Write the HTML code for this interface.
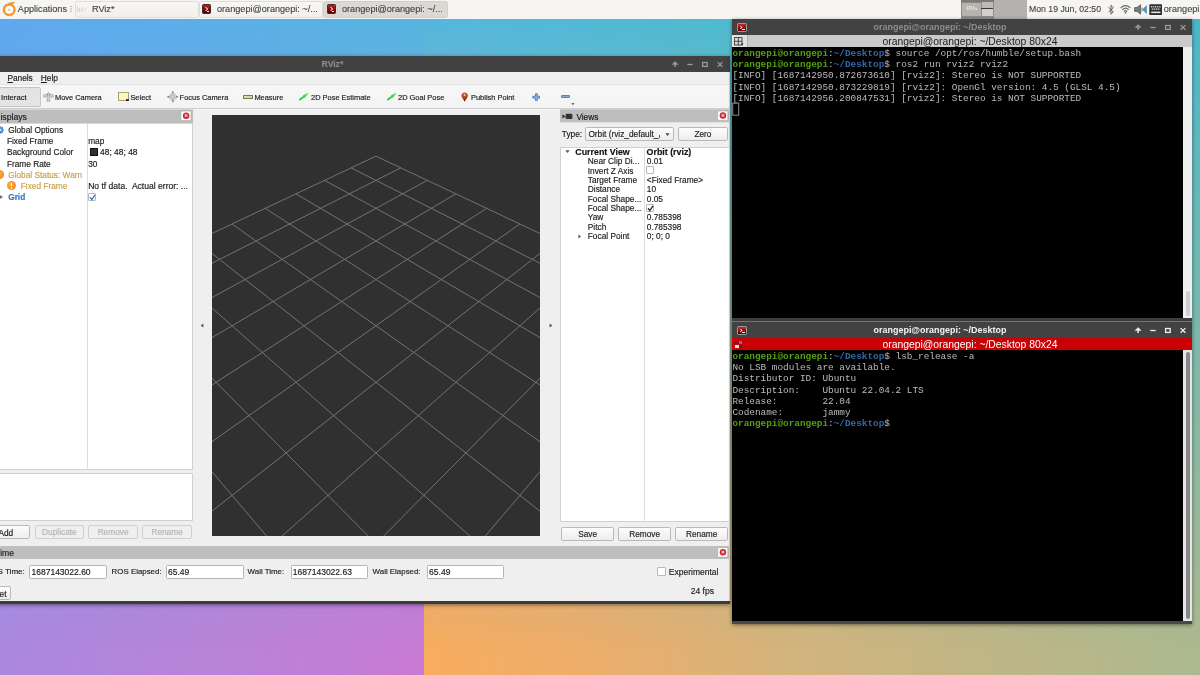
<!DOCTYPE html>
<html><head><meta charset="utf-8"><title>desktop</title>
<style>
*{box-sizing:border-box;margin:0;padding:0}
html,body{width:1200px;height:675px;overflow:hidden}
body{position:relative;font-family:"Liberation Sans",sans-serif;background:#5aaee6;color:#1a1a1a}
.abs,.abs div,.abs svg,.abs i{position:absolute}
.t{white-space:pre;line-height:1}
/* wallpaper */
#wp-bot{left:0;top:0;width:1200px;height:675px;background:linear-gradient(90deg,#aa88de 0px,#b784d9 200px,#c87ad4 423.6px,#f8ac5e 423.6px,#ecae6c 600px,#d2b47d 800px,#beb687 1000px,#acb98f 1200px)}
#wp-top{left:0;top:0;width:1200px;height:675px;background:linear-gradient(90deg,#5ea9ee 0px,#5aafe7 240px,#54b7dc 480px,#4ebbd0 730px,#4bb7c8 1200px);-webkit-mask-image:linear-gradient(180deg,#000 0px,#000 20px,transparent 650px);mask-image:linear-gradient(180deg,#000 0px,#000 20px,transparent 650px)}
/* top panel */
#panel{left:0;top:0;width:1200px;height:18.6px;background:#f6f5f3;font-size:9.15px;color:#3c3c3c}
/* ---------- RViz window ---------- */
#rviz{left:-30px;top:56px;width:759.7px;height:547.5px;background:#efefef;overflow:hidden;box-shadow:0 1px 4px rgba(0,0,0,.45)}
#rv-title{left:0;top:0;width:100%;height:16.2px;background:#414141}
#rv-bottom{left:0;bottom:0;width:100%;height:2.6px;background:#3c3c3c}
#rv-right{right:0;top:16.2px;width:0.6px;height:528.6px;background:#d6d6d6}
.pg{left:30px;top:-56px;width:0;height:0} /* page-coordinate origin inside rviz */
.rvt{font-size:7.45px;color:#1b1b1b}
.hdr{background:#bebebe;height:13.6px}
.white{background:#fff}
.btn{border:0.7px solid #b9b9b9;border-radius:1.8px;background:linear-gradient(#fdfdfd,#ededed);font-size:8.3px;color:#222;text-align:center}
.btn.dis{color:#b4b4b4;background:#efefef;border-color:#cfcfcf}
.fld{border:0.7px solid #b5b5b5;border-radius:1.5px;background:#fff;font-size:8.3px}
.tree{font-size:8.3px;color:#1b1b1b}
.cls{width:10.3px;height:9.6px;background:#fff;border:0.6px solid #a9a9a9;border-radius:1.2px}
.cls i{left:1.35px;top:0.95px;width:6.4px;height:6.4px;border-radius:50%;background:radial-gradient(circle at 50% 45%,#f08a90 0,#d63a40 35%,#c42026 100%)}
.cls i:before,.cls i:after{content:"";position:absolute;left:1.6px;top:2.8px;width:3.2px;height:0.8px;background:rgba(255,255,255,.85);transform:rotate(45deg)}
.cls i:after{transform:rotate(-45deg)}
/* ---------- Terminals ---------- */
.term{left:731.6px;width:460.3px;background:#000;box-shadow:0 1px 4px rgba(0,0,0,.45)}
.term .tb{left:0;top:0;width:100%;height:16.2px;background:#424242}
.term .ttl{left:8px;width:400px;text-align:center;font-size:8.96px;font-weight:bold;top:4px}
.term .sub{left:0;top:16.2px;width:100%;height:11.7px}
.term .subt{left:15.5px;width:445px;text-align:center;font-size:10.36px;top:17.5px}
.term pre{position:absolute;left:0.4px;top:28.8px;font-family:"Liberation Mono",monospace;font-size:9.38px;line-height:11.25px;color:#bcbcbc;white-space:pre}
.term pre b{color:#56a012}
.term pre b.p{color:#3567a8}
.term .sb{right:0;top:28px;width:9.4px;background:#e6e6e6}
.term .sh{right:2px;width:4.6px;background:#868686;border-radius:2.3px}
.term .bb{left:0;bottom:0;width:100%;height:2.6px;background:#484848}
.term .ico{left:5.3px;top:3.8px;width:9.4px;height:9.4px;background:linear-gradient(#d42424,#7a0606 70%,#5c0000);border:0.8px solid #9a9a9a;border-radius:1.2px}
.term .ico:before{content:"";position:absolute;left:1.2px;top:1.8px;width:2.4px;height:2.4px;border-right:0.9px solid #fff;border-top:0.9px solid #fff;transform:rotate(45deg) scale(.8)}
.term .ico:after{content:"";position:absolute;left:4px;top:5.4px;width:2.6px;height:0.8px;background:#fff}
/* panel items */
#panel .tk{top:0.6px;height:17.4px;border:0.7px solid #dfddd9;border-radius:2.4px;background:linear-gradient(#f8f7f5,#f1f0ed)}
#panel .tk.act{background:#dcd8d3;border-color:#d2cec9}
#panel .tx{top:4.6px;color:#3e3e3e}
.tico{width:9.4px;height:9.4px;background:linear-gradient(#c81c1c,#7a0606 65%,#4c0000);border:0.9px solid #3a2a2a;border-radius:1.2px;top:4.4px}
.tico:before{content:"";position:absolute;left:1.2px;top:1.6px;width:2.6px;height:2.6px;border-right:0.9px solid #fff;border-top:0.9px solid #fff;transform:rotate(45deg) scale(.8)}
.tico:after{content:"";position:absolute;left:4px;top:5.4px;width:2.6px;height:0.8px;background:#fff}
.tv{font-size:8.3px;color:#1b1b1b}
.warn{color:#c6a24a}
.ck{background:#fff;border:0.7px solid #b8b8b8;border-radius:1px}
#rviz .t,#rviz .btn{-webkit-text-stroke:0.16px currentColor}
#panel .t{-webkit-text-stroke:0.1px currentColor}
#panel,#rviz,.term{will-change:transform}
body>div{filter:blur(0.35px)}

</style></head>
<body>
<div class="abs" id="wp-bot"></div>
<div class="abs" id="wp-top"></div>
<div class="abs" id="panel">
 <svg style="left:1.6px;top:1.2px" width="15" height="16.5" viewBox="0 0 15 16.5">
  <circle cx="7.2" cy="8.7" r="5.3" fill="#fff" stroke="#f09a32" stroke-width="2.5"/>
  <circle cx="7.2" cy="8.7" r="1.3" fill="#f8c98a"/>
  <path d="M6.6 3.4C7 2.2 7.8 1.7 8.6 1.6" stroke="#e8902a" stroke-width="1.1" fill="none"/>
  <path d="M8.3 2.6C9.4 1.3 11 1 12.6 1.3C11.9 2.7 10.2 3.4 8.3 2.6Z" fill="#7aa63a"/>
  <path d="M9.5 2.3C10.6 1.5 11.8 1.3 12.9 1.3" stroke="#e8902a" stroke-width=".7" fill="none"/>
 </svg>
 <div class="t tx" style="left:17.8px">Applications</div>
 <div style="left:70.2px;top:6.4px;width:2.2px;height:0.8px;background:#b9b7b3;box-shadow:0 2.4px 0 #b9b7b3,0 4.8px 0 #b9b7b3"></div>
 <div class="tk" style="left:74.5px;width:124px"></div>
 <div class="tk" style="left:198.8px;width:124.4px"></div>
 <div class="tk act" style="left:323.2px;width:125px"></div>
 <svg style="left:77px;top:5.4px" width="9" height="8" viewBox="0 0 9 8"><g stroke="#cfcdc9" stroke-width=".9" fill="none"><path d="M0.6 6.6V1.4M2.6 6.6V3M4.4 6.6L5.6 2M7 5.6L8.4 3.6"/></g></svg>
 <div class="t tx" style="left:92px">RViz*</div>
 <div class="tico" style="left:201.8px"></div>
 <div class="t tx" style="left:217px">orangepi@orangepi: ~/...</div>
 <div class="tico" style="left:326.8px"></div>
 <div class="t tx" style="left:342px">orangepi@orangepi: ~/...</div>
 <!-- workspace switcher -->
 <div style="left:961.3px;top:0;width:32.4px;height:18.6px;background:#8f8c88"></div>
 <div style="left:961.3px;top:0;width:32.4px;height:2.2px;background:#7d7a76"></div>
 <div style="left:962.2px;top:3px;width:18.8px;height:13px;background:#b6b3ae"></div>
 <div class="t" style="left:966.6px;top:6.2px;font-size:5.5px;color:#e3e1de;font-weight:bold">RV<span style="font-size:4px">iz</span></div>
 <div style="left:981.8px;top:1.7px;width:10.9px;height:6px;background:#bdbab5"></div>
 <div style="left:981.8px;top:9.4px;width:10.9px;height:6.6px;background:#d2d0cc"></div>
 <div style="left:981.4px;top:8.1px;width:11.6px;height:1px;background:#3a3a3a"></div>
 <div style="left:993.6px;top:0;width:33.6px;height:18.6px;background:#b4b2af"></div>
 <div class="t tx" style="left:1029px;font-size:8.7px">Mon 19 Jun, 02:50</div>
 <!-- bluetooth -->
 <svg style="left:1106.6px;top:3.6px" width="8" height="11.4" viewBox="0 0 8 11.4"><path d="M1.5 3.3L6.3 7.7L4 10.2V1.2L6.3 3.7L1.5 8.1" stroke="#5a5a5a" stroke-width=".95" fill="none"/></svg>
 <!-- wifi -->
 <svg style="left:1119.8px;top:4.2px" width="11" height="10.4" viewBox="0 0 11 10.4"><g stroke="#6a6a6a" stroke-width="1.15" fill="none" stroke-linecap="round"><path d="M1 3.6C3.6 1 7.4 1 10 3.6"/><path d="M2.7 5.5C4.4 3.8 6.6 3.8 8.3 5.5"/><path d="M4.2 7.3C5 6.5 6 6.5 6.8 7.3"/></g><circle cx="5.5" cy="8.9" r=".8" fill="#5a5a5a"/></svg>
 <!-- volume -->
 <svg style="left:1133.6px;top:4px" width="14" height="11" viewBox="0 0 14 11"><path d="M0.6 3.6H3L6.6 0.7V10.2L3 7.4H0.6Z" fill="#7b7b7b" stroke="#4e4e4e" stroke-width=".7"/><path d="M12.8 1V10L8.2 5.5Z" fill="#4d93bd"/><path d="M8 3.6V7.4" stroke="#3d7da6" stroke-width=".8"/></svg>
 <!-- keyboard -->
 <svg style="left:1148.6px;top:3.8px" width="13.6" height="11.6" viewBox="0 0 13.6 11.6"><rect x=".3" y=".3" width="13" height="11" rx="1.2" fill="#2f2f2f"/><g fill="#e8e8e8"><rect x="1.8" y="2.2" width="1.4" height="1.2"/><rect x="3.9" y="2.2" width="1.4" height="1.2"/><rect x="6" y="2.2" width="1.4" height="1.2"/><rect x="8.1" y="2.2" width="1.4" height="1.2"/><rect x="10.2" y="2.2" width="1.4" height="1.2"/><rect x="2.8" y="4.5" width="1.4" height="1.2"/><rect x="4.9" y="4.5" width="1.4" height="1.2"/><rect x="7" y="4.5" width="1.4" height="1.2"/><rect x="9.1" y="4.5" width="1.4" height="1.2"/><rect x="2.2" y="7.6" width="9.2" height="1.5"/></g></svg>
 <div class="t tx" style="left:1163.8px">orangepi</div>
</div>
<div class="abs" id="rviz">
 <div id="rv-title"></div>
 <div class="pg">
  <!-- title -->
  <div class="t" style="left:321.6px;top:60.4px;font-size:8.6px;color:#8a8a8a;font-weight:bold">RViz*</div>
  <!-- title buttons -->
  <svg style="left:670px;top:58px" width="56" height="14" viewBox="0 0 56 14"><g stroke="#9a9a9a" stroke-width="1.15" fill="none"><path d="M5.1 9V5.4" stroke-width="1.5"/><path d="M2 6.6L5.1 3.4L8.2 6.6Z" fill="#9a9a9a" stroke-width=".4"/><path d="M17.3 6.5h5.4" stroke-width="1.3"/><rect x="32.6" y="4.5" width="4.6" height="3.9" stroke-width="1.3"/><path d="M47.6 4.1l4.8 4.7M52.4 4.1L47.6 8.8" stroke-width="1.25"/></g></svg>
  <!-- menubar -->
  <div class="t" style="left:7.4px;top:73.8px;font-size:8.3px"><u>P</u>anels</div>
  <div class="t" style="left:40.8px;top:73.8px;font-size:8.3px"><u>H</u>elp</div>
  <!-- toolbar -->
  <div style="left:-2px;top:85px;width:731.2px;height:23px;background:linear-gradient(#f7f7f7,#f3f3f3)"></div>
  <div style="left:-2px;top:84.4px;width:731.2px;height:0.7px;background:#e2e2e2"></div>
  <div style="left:-4px;top:87.4px;width:45.4px;height:19.4px;background:#e4e4e4;border:0.7px solid #c6c6c6;border-radius:2px"></div>
  <div class="t rvt" style="left:1px;top:93.5px;font-size:7.7px">Interact</div>
  <div class="t rvt" style="left:55px;top:93.6px">Move Camera</div>
  <div class="t rvt" style="left:130.4px;top:93.6px">Select</div>
  <div class="t rvt" style="left:179.6px;top:93.6px">Focus Camera</div>
  <div class="t rvt" style="left:254.4px;top:93.6px">Measure</div>
  <div class="t rvt" style="left:311px;top:93.6px">2D Pose Estimate</div>
  <div class="t rvt" style="left:398px;top:93.6px">2D Goal Pose</div>
  <div class="t rvt" style="left:471px;top:93.6px">Publish Point</div>
  <svg style="left:43.2px;top:91.6px" width="11" height="10.8" viewBox="0 0 11 10.8"><g fill="#e2e2e2" stroke="#858585" stroke-width=".55" stroke-linejoin="round"><path d="M5.4 0.4L7.5 2.7H6.2V8.1H7.5L5.4 10.4L3.3 8.1H4.6V2.7H3.3Z"/><path d="M0.4 4.9L1 2.3L1.9 3.1L4.6 1.9V3.5L2.6 4.4L3.2 5.3Z"/><path d="M10.4 4.9L9.8 2.3L8.9 3.1L6.2 1.9V3.5L8.2 4.4L7.6 5.3Z"/></g></svg>
  <div style="left:118.3px;top:92px;width:10.5px;height:8.8px;background:#fcf7b6;border:0.8px solid #a3a37c"></div>
  <div style="left:126.4px;top:98.8px;width:2.4px;height:2px;background:#2a2a2a;border-radius:.6px"></div>
  <svg style="left:166.8px;top:91.4px" width="11.6" height="11.6" viewBox="0 0 11.6 11.6"><path d="M5.8 0.9L10.7 5.8L5.8 10.7L0.9 5.8Z" fill="#cfcfcf" stroke="#bcbcbc" stroke-width=".5"/><g stroke="#8e8e8e" stroke-width="1.5"><path d="M5.8 0.3V2.6M5.8 9V11.3M0.3 5.8H2.6M9 5.8H11.3"/></g><circle cx="5.8" cy="5.8" r="1.8" fill="#d6d6d6" stroke="#a6a6a6" stroke-width=".6"/></svg>
  <div style="left:242.8px;top:95px;width:10.2px;height:3.9px;background:#dcdaa6;border:0.8px solid #77775e;border-radius:.6px"></div>
  <svg style="left:299.3px;top:92.1px" width="10" height="8.6" viewBox="0 0 10 8.6"><path d="M0.7 7.7L5 4.5" stroke="#2bcc3e" stroke-width="1.7" stroke-linecap="round" fill="none"/><path d="M9.7 0.6L3.9 3.4L5.9 5.9Z" fill="#3bdc4c"/></svg>
  <svg style="left:386.6px;top:92.1px" width="10" height="8.6" viewBox="0 0 10 8.6"><path d="M0.7 7.7L5 4.5" stroke="#2bcc3e" stroke-width="1.7" stroke-linecap="round" fill="none"/><path d="M9.7 0.6L3.9 3.4L5.9 5.9Z" fill="#3bdc4c"/></svg>
  <svg style="left:460.9px;top:91.7px" width="7.4" height="10.2" viewBox="0 0 7.4 10"><defs><linearGradient id="pg" x1="0" y1="0" x2="0" y2="1"><stop offset="0" stop-color="#da5638"/><stop offset="0.55" stop-color="#b8461e"/><stop offset="1" stop-color="#2e2014"/></linearGradient></defs><path d="M3.7 0.3C1.7 0.3 0.4 1.7 0.4 3.5C0.4 5.6 2.6 7.4 3.7 9.7C4.8 7.4 7 5.6 7 3.5C7 1.7 5.7 0.3 3.7 0.3Z" fill="url(#pg)"/><circle cx="3.6" cy="3" r="0.95" fill="#f6ddd0"/></svg>
  <svg style="left:531.6px;top:92.6px" width="8.8" height="8.4" viewBox="0 0 8.8 8.4"><path d="M3.5 0.7H5.3V3.3H8V5.1H5.3V7.7H3.5V5.1H0.8V3.3H3.5Z" fill="#92b4e4" stroke="#4f7dc2" stroke-width=".9" stroke-linejoin="round"/></svg>
  <div style="left:561.2px;top:95.3px;width:8.8px;height:2.8px;background:#86a8d8;border:0.7px solid #5580bd;border-radius:1px"></div>
  <svg style="left:570.8px;top:102.8px" width="3.8" height="2.2" viewBox="0 0 3.8 2.2"><path d="M0.2 0.2H3.6L1.9 2Z" fill="#444"/></svg>
  <div style="left:-2px;top:107.8px;width:731.2px;height:0.8px;background:#cfcfcf"></div>
  <div style="left:-2px;top:108.6px;width:731.2px;height:1.2px;background:#f6f6f6"></div>
  <!-- Displays panel -->
  <div class="hdr" style="left:-2px;top:109px;width:194.7px;height:14.2px;transform:translateY(0.45px)"></div>
  <div class="t" style="left:-5.9px;top:112.7px;font-size:8.7px">Displays</div>
  <svg style="left:179px;top:110px" width="13" height="12" viewBox="0 0 13 12"><defs><radialGradient id="cg1" cx="50%" cy="45%" r="55%"><stop offset="0" stop-color="#f29aa0"/><stop offset=".4" stop-color="#d8434a"/><stop offset="1" stop-color="#c01c22"/></radialGradient></defs><g transform="translate(1.90 1.10)"><rect x="0" y="0" width="10.1" height="9.4" rx="1" fill="#fff" stroke="#a4a4a4" stroke-width=".55"/><circle cx="5.25" cy="4.55" r="3.25" fill="url(#cg1)"/><path d="M4 3.3L6.5 5.8M6.5 3.3L4 5.8" stroke="#fff" stroke-opacity=".85" stroke-width=".8"/></g></svg>
  <div class="white" style="left:-2px;top:124px;width:194.6px;height:346px;border-right:0.7px solid #d0d0d0;border-bottom:0.7px solid #d0d0d0"></div>
  <div style="left:86.6px;top:124px;width:0.6px;height:346px;background:#dcdcdc"></div>
  <div class="white" style="left:-2px;top:473px;width:194.6px;height:48px;border:0.7px solid #d0d0d0"></div>
  <!-- 3D view -->
  <div style="left:212.4px;top:114.5px;width:327.9px;height:421.5px;background:#303030;overflow:hidden"><svg class="grid" width="327.9" height="421.5" viewBox="0 0 327.9 421.5"><g stroke="#767678" stroke-width="0.95" fill="none">
<line x1="163.95" y1="41.15" x2="523.72" y2="210.75"/>
<line x1="163.95" y1="41.15" x2="-195.82" y2="210.75"/>
<line x1="139.14" y1="52.85" x2="504.79" y2="237.53"/>
<line x1="188.76" y1="52.85" x2="-176.89" y2="237.53"/>
<line x1="112.55" y1="65.38" x2="483.75" y2="267.28"/>
<line x1="215.35" y1="65.38" x2="-155.85" y2="267.28"/>
<line x1="84.00" y1="78.84" x2="460.23" y2="300.54"/>
<line x1="243.90" y1="78.84" x2="-132.33" y2="300.54"/>
<line x1="53.25" y1="93.34" x2="433.78" y2="337.95"/>
<line x1="274.65" y1="93.34" x2="-105.88" y2="337.95"/>
<line x1="20.04" y1="108.99" x2="403.80" y2="380.35"/>
<line x1="307.86" y1="108.99" x2="-75.90" y2="380.35"/>
<line x1="-15.94" y1="125.95" x2="369.53" y2="428.81"/>
<line x1="343.84" y1="125.95" x2="-41.63" y2="428.81"/>
<line x1="-55.04" y1="144.39" x2="330.00" y2="484.72"/>
<line x1="382.94" y1="144.39" x2="-2.10" y2="484.72"/>
<line x1="-97.70" y1="164.50" x2="283.87" y2="549.95"/>
<line x1="425.60" y1="164.50" x2="44.03" y2="549.95"/>
<line x1="-144.43" y1="186.52" x2="229.36" y2="627.04"/>
<line x1="472.33" y1="186.52" x2="98.54" y2="627.04"/>
<line x1="-195.82" y1="210.75" x2="163.95" y2="719.55"/>
<line x1="523.72" y1="210.75" x2="163.95" y2="719.55"/>
</g></svg>
</div>
  <!-- Views panel -->
  <div class="hdr" style="left:560px;top:109px;width:170px;height:13px;transform:translateY(0.3px)"></div>
  <div class="t" style="left:576.4px;top:112.5px;font-size:8.3px">Views</div>
  <svg style="left:716px;top:110px" width="13" height="12" viewBox="0 0 13 12"><defs><radialGradient id="cg2" cx="50%" cy="45%" r="55%"><stop offset="0" stop-color="#f29aa0"/><stop offset=".4" stop-color="#d8434a"/><stop offset="1" stop-color="#c01c22"/></radialGradient></defs><g transform="translate(1.70 1.00)"><rect x="0" y="0" width="10.1" height="9.4" rx="1" fill="#fff" stroke="#a4a4a4" stroke-width=".55"/><circle cx="5.25" cy="4.55" r="3.25" fill="url(#cg2)"/><path d="M4 3.3L6.5 5.8M6.5 3.3L4 5.8" stroke="#fff" stroke-opacity=".85" stroke-width=".8"/></g></svg>
  <div class="white" style="left:560px;top:146.6px;width:170px;height:375.4px;border:0.7px solid #d0d0d0;border-right:0"></div>
  <div style="left:644.3px;top:146.6px;width:0.6px;height:375px;background:#dcdcdc"></div>
  <!-- Time panel -->
  <div class="hdr" style="left:-2px;top:546.2px;width:732px;height:12.8px"></div>
  <div class="t" style="left:-4.8px;top:549px;font-size:8.6px">Time</div>
  <svg style="left:716px;top:546px" width="13" height="12" viewBox="0 0 13 12"><defs><radialGradient id="cg3" cx="50%" cy="45%" r="55%"><stop offset="0" stop-color="#f29aa0"/><stop offset=".4" stop-color="#d8434a"/><stop offset="1" stop-color="#c01c22"/></radialGradient></defs><g transform="translate(1.70 1.70)"><rect x="0" y="0" width="10.1" height="9.4" rx="1" fill="#fff" stroke="#a4a4a4" stroke-width=".55"/><circle cx="5.25" cy="4.55" r="3.25" fill="url(#cg3)"/><path d="M4 3.3L6.5 5.8M6.5 3.3L4 5.8" stroke="#fff" stroke-opacity=".85" stroke-width=".8"/></g></svg>
  <svg style="left:-4px;top:125.8px" width="8" height="8" viewBox="0 0 8 8"><circle cx="4" cy="4" r="2.6" fill="none" stroke="#4a8fe0" stroke-width="1.5"/><g stroke="#4a8fe0" stroke-width="1.2"><path d="M4 0v8M0 4h8M1.2 1.2l5.6 5.6M6.8 1.2L1.2 6.8"/></g><circle cx="4" cy="4" r="1.1" fill="#fff"/></svg>
  <div class="t tv" style="left:8.2px;top:130px;transform:translateY(-50%);">Global Options</div>
  <div class="t tv" style="left:6.9px;top:141.1px;transform:translateY(-50%);">Fixed Frame</div>
  <div class="t tv" style="left:6.9px;top:152.3px;transform:translateY(-50%);">Background Color</div>
  <div class="t tv" style="left:6.9px;top:163.6px;transform:translateY(-50%);">Frame Rate</div>
  <div style="left:-5px;top:170.2px;width:8.6px;height:8.6px;border-radius:50%;background:radial-gradient(circle at 40% 35%,#ffb04a,#ee7f16)"></div>
  <div class="t tv warn" style="left:8.2px;top:174.8px;transform:translateY(-50%);">Global Status: Warn</div>
  <div style="left:6.5px;top:180.8px;width:9.6px;height:9.6px;border-radius:50%;background:radial-gradient(circle at 40% 35%,#ffb04a,#ee7f16)"></div>
  <div style="left:10.7px;top:182.8px;width:1.3px;height:3.6px;background:#fff;border-radius:.5px"></div><div style="left:10.7px;top:187.3px;width:1.3px;height:1.3px;background:#fff;border-radius:50%"></div>
  <div class="t tv warn" style="left:20.8px;top:186px;transform:translateY(-50%);">Fixed Frame</div>
  <svg style="left:-2px;top:194.4px" width="6" height="6" viewBox="0 0 6 6"><path d="M1 0.6L5 3L1 5.4Z" fill="#6a6a6a"/></svg>
  <div class="t tv" style="left:8.2px;top:197.2px;transform:translateY(-50%);color:#2b79c9;font-weight:bold">Grid</div>
  <div class="t tv" style="left:88.2px;top:141.1px;transform:translateY(-50%);">map</div>
  <div style="left:90px;top:148.4px;width:7.6px;height:7.2px;background:#303030;border:0.6px solid #111"></div>
  <div class="t tv" style="left:100px;top:152.3px;transform:translateY(-50%);font-size:8.45px">48; 48; 48</div>
  <div class="t tv" style="left:88.2px;top:163.6px;transform:translateY(-50%);">30</div>
  <div class="t tv" style="left:88.2px;top:186px;transform:translateY(-50%);font-size:8.55px">No tf data.  Actual error: ...</div>
  <div class="ck" style="left:88.4px;top:192.9px;width:8px;height:7.8px"></div>
  <svg style="left:89.4px;top:193.6px" width="7" height="7" viewBox="0 0 7 7"><path d="M1 3.2L2.8 5.6L6 0.8" stroke="#2f74c6" stroke-width="1.2" fill="none"/></svg>
  <div class="btn" style="left:-20px;top:525.2px;width:50.4px;height:14px;line-height:12.6px;font-size:8.3px"></div>
  <div class="t tv" style="left:-1.6px;top:532.6px;transform:translateY(-50%);">Add</div>
  <div class="btn dis" style="left:34.6px;top:525.2px;width:49.6px;height:14px;line-height:12.6px;font-size:8.3px">Duplicate</div>
  <div class="btn dis" style="left:88.4px;top:525.2px;width:49.4px;height:14px;line-height:12.6px;font-size:8.3px">Remove</div>
  <div class="btn dis" style="left:142.4px;top:525.2px;width:49.4px;height:14px;line-height:12.6px;font-size:8.3px">Rename</div>
  <svg style="left:199.9px;top:323.2px" width="4" height="5" viewBox="0 0 4 5"><path d="M3.4 0.4L0.6 2.5L3.4 4.6Z" fill="#555"/></svg>
  <svg style="left:549px;top:323px" width="4" height="5" viewBox="0 0 4 5"><path d="M0.6 0.4L3.4 2.5L0.6 4.6Z" fill="#555"/></svg>
  <svg style="left:562.4px;top:113.4px" width="11" height="7" viewBox="0 0 11 7"><rect x="3.6" y="0.8" width="6.8" height="5.2" rx="1.2" fill="#333"/><path d="M0.4 1.2L3.6 3.4L0.4 5.6Z" fill="#333"/></svg>
  <div class="t tv" style="left:561.8px;top:134.3px;transform:translateY(-50%);">Type:</div>
  <div class="btn" style="left:585px;top:127.2px;width:88.5px;height:13.6px"></div>
  <div class="t tv" style="left:588.4px;top:134.3px;transform:translateY(-50%);">Orbit (rviz_default_</div>
  <div style="left:658.6px;top:135.4px;width:1.6px;height:3px;border-right:0.8px solid #555;border-bottom:0.8px solid #555;border-bottom-right-radius:1.4px"></div>
  <svg style="left:665px;top:132.8px" width="5" height="3.4" viewBox="0 0 5 3.4"><path d="M0.3 0.3H4.7L2.5 3Z" fill="#4a4a4a"/></svg>
  <div class="btn" style="left:678.3px;top:127.2px;width:49.3px;height:14px;line-height:12.6px;font-size:8.3px">Zero</div>
  <svg style="left:564.6px;top:150.4px" width="5" height="3.4" viewBox="0 0 5 3.4"><path d="M0.3 0.3H4.7L2.5 3Z" fill="#5a5a5a"/></svg>
  <div class="t tv" style="left:575.3px;top:151.8px;transform:translateY(-50%);font-weight:bold;font-size:8.85px;color:#111">Current View</div>
  <div class="t tv" style="left:646.6px;top:151.8px;transform:translateY(-50%);font-weight:bold;font-size:8.85px;color:#111">Orbit (rviz)</div>
  <div class="t tv" style="left:587.8px;top:161.175px;transform:translateY(-50%);">Near Clip Di...</div>
  <div class="t tv" style="left:646.8px;top:161.175px;transform:translateY(-50%);">0.01</div>
  <div class="t tv" style="left:587.8px;top:170.55px;transform:translateY(-50%);">Invert Z Axis</div>
  <div class="t tv" style="left:587.8px;top:179.925px;transform:translateY(-50%);">Target Frame</div>
  <div class="t tv" style="left:646.8px;top:179.925px;transform:translateY(-50%);">&lt;Fixed Frame&gt;</div>
  <div class="t tv" style="left:587.8px;top:189.3px;transform:translateY(-50%);">Distance</div>
  <div class="t tv" style="left:646.8px;top:189.3px;transform:translateY(-50%);">10</div>
  <div class="t tv" style="left:587.8px;top:198.675px;transform:translateY(-50%);">Focal Shape...</div>
  <div class="t tv" style="left:646.8px;top:198.675px;transform:translateY(-50%);">0.05</div>
  <div class="t tv" style="left:587.8px;top:208.05px;transform:translateY(-50%);">Focal Shape...</div>
  <div class="t tv" style="left:587.8px;top:217.425px;transform:translateY(-50%);">Yaw</div>
  <div class="t tv" style="left:646.8px;top:217.425px;transform:translateY(-50%);">0.785398</div>
  <div class="t tv" style="left:587.8px;top:226.8px;transform:translateY(-50%);">Pitch</div>
  <div class="t tv" style="left:646.8px;top:226.8px;transform:translateY(-50%);">0.785398</div>
  <div class="t tv" style="left:587.8px;top:236.175px;transform:translateY(-50%);">Focal Point</div>
  <div class="t tv" style="left:646.8px;top:236.175px;transform:translateY(-50%);">0; 0; 0</div>
  <div class="ck" style="left:646.3px;top:166.3px;width:8.1px;height:8px"></div>
  <div class="ck" style="left:646.3px;top:203.8px;width:8.1px;height:8px"></div>
  <svg style="left:647.3px;top:204.6px" width="7" height="7" viewBox="0 0 7 7"><path d="M1 3.2L2.8 5.6L6 0.8" stroke="#222" stroke-width="1.2" fill="none"/></svg>
  <svg style="left:577.6px;top:233.7px" width="3.4" height="5" viewBox="0 0 3.4 5"><path d="M0.4 0.4L3 2.5L0.4 4.6Z" fill="#5a5a5a"/></svg>
  <div class="btn" style="left:561.2px;top:527px;width:53.0px;height:14.0px;line-height:12.6px;font-size:8.3px">Save</div>
  <div class="btn" style="left:618.3px;top:527px;width:52.6px;height:14.0px;line-height:12.6px;font-size:8.3px">Remove</div>
  <div class="btn" style="left:675.4px;top:527px;width:52.6px;height:14.0px;line-height:12.6px;font-size:8.3px">Rename</div>
  <div class="t tv" style="left:-14.4px;top:571.7px;transform:translateY(-50%);font-size:8px">ROS Time:</div>
  <div class="fld" style="left:29.2px;top:564.5px;width:78.1px;height:14.1px"></div>
  <div class="t tv" style="left:31.5px;top:571.7px;transform:translateY(-50%);font-size:8.5px">1687143022.60</div>
  <div class="t tv" style="left:111.6px;top:571.7px;transform:translateY(-50%);font-size:7.9px">ROS Elapsed:</div>
  <div class="fld" style="left:165.7px;top:564.5px;width:77.9px;height:14.1px"></div>
  <div class="t tv" style="left:168.0px;top:571.7px;transform:translateY(-50%);font-size:8.5px">65.49</div>
  <div class="t tv" style="left:247.6px;top:571.7px;transform:translateY(-50%);font-size:7.9px">Wall Time:</div>
  <div class="fld" style="left:290.5px;top:564.5px;width:77.8px;height:14.1px"></div>
  <div class="t tv" style="left:292.8px;top:571.7px;transform:translateY(-50%);font-size:8.5px">1687143022.63</div>
  <div class="t tv" style="left:372.6px;top:571.7px;transform:translateY(-50%);font-size:7.9px">Wall Elapsed:</div>
  <div class="fld" style="left:426.8px;top:564.5px;width:77.7px;height:14.1px"></div>
  <div class="t tv" style="left:429.1px;top:571.7px;transform:translateY(-50%);font-size:8.5px">65.49</div>
  <div class="ck" style="left:657px;top:567.4px;width:8.6px;height:8.6px"></div>
  <div class="t tv" style="left:668.8px;top:571.8px;transform:translateY(-50%);font-size:8.5px">Experimental</div>
  <div class="t tv" style="left:690.8px;top:590.8px;transform:translateY(-50%);font-size:8.5px">24 fps</div>
  <div class="btn" style="left:-20px;top:586.2px;width:31.4px;height:13.4px;line-height:12.0px;font-size:8.3px"></div>
  <div class="t tv" style="left:-15.2px;top:593.6px;transform:translateY(-50%);">Reset</div>
 </div>
 <div id="rv-bottom"></div><div id="rv-right"></div>
</div>
<div class="abs term" id="term1" style="top:19px;height:303px">
 <div class="tb"></div>
 <div class="ico"></div>
 <div class="t ttl" style="color:#8c8c8c">orangepi@orangepi: ~/Desktop</div>
 <svg style="left:400.7px;top:1.6px" width="56" height="14" viewBox="0 0 56 14"><g stroke="#9a9a9a" stroke-width="1.15" fill="none"><path d="M5.1 9V5.4" stroke-width="1.5"/><path d="M2 6.6L5.1 3.4L8.2 6.6Z" fill="#9a9a9a" stroke-width=".4"/><path d="M17.3 6.5h5.4" stroke-width="1.3"/><rect x="32.6" y="4.5" width="4.6" height="3.9" stroke-width="1.3"/><path d="M47.6 4.1l4.8 4.7M52.4 4.1L47.6 8.8" stroke-width="1.25"/></g></svg>
 <div class="sub" style="background:#cacaca"></div>
 <div style="left:0;top:16.2px;width:16px;height:11.7px;background:#e2e2e2;border-right:0.6px solid #b0b0b0"></div>
 <svg style="left:2.4px;top:17.8px" width="10" height="9" viewBox="0 0 10 9"><g stroke="#333" stroke-width=".9" fill="none"><rect x=".6" y=".6" width="7.4" height="7.4"/><path d="M4.3 .6V8M.6 4.3H8"/></g><path d="M6.8 6.6H9.6L8.2 8.4Z" fill="#333"/></svg>
 <div class="t subt" style="color:#1c1c1c">orangepi@orangepi: ~/Desktop 80x24</div>
<pre><b>orangepi@orangepi</b>:<b class="p">~/Desktop</b>$ source /opt/ros/humble/setup.bash
<b>orangepi@orangepi</b>:<b class="p">~/Desktop</b>$ ros2 run rviz2 rviz2
[INFO] [1687142950.872673610] [rviz2]: Stereo is NOT SUPPORTED
[INFO] [1687142950.873229819] [rviz2]: OpenGl version: 4.5 (GLSL 4.5)
[INFO] [1687142956.200847531] [rviz2]: Stereo is NOT SUPPORTED</pre>
 <div style="left:0;top:84px;width:7px;height:13px;border:1px solid #8c8c8c;transform:translate(0.2px,-0.3px)"></div>
 <div class="sb" style="height:270.8px;background:#efefef"></div>
 <div class="sh" style="top:272px;height:24.6px;background:#cfcfcf"></div>
 <div class="bb" style="height:4.2px;background:#404040"></div>
 <div style="left:0;bottom:0.4px;width:100%;height:0.8px;background:#5f9088"></div>
</div>
<div class="abs term" id="term2" style="top:322px;height:301.6px">
 <div class="tb"></div>
 <div class="ico"></div>
 <div class="t ttl" style="color:#f2f2f2">orangepi@orangepi: ~/Desktop</div>
 <svg style="left:400.7px;top:1.6px" width="56" height="14" viewBox="0 0 56 14"><g stroke="#f0f0f0" stroke-width="1.15" fill="none"><path d="M5.1 9V5.4" stroke-width="1.5"/><path d="M2 6.6L5.1 3.4L8.2 6.6Z" fill="#f0f0f0" stroke-width=".4"/><path d="M17.3 6.5h5.4" stroke-width="1.3"/><rect x="32.6" y="4.5" width="4.6" height="3.9" stroke-width="1.3"/><path d="M47.6 4.1l4.8 4.7M52.4 4.1L47.6 8.8" stroke-width="1.25"/></g></svg>
 <div class="sub" style="background:#c90004"></div>
 <div style="left:3.2px;top:18.9px;width:3.4px;height:3.4px;background:#d01018;border:0.5px solid #8a0a0e"></div><div style="left:7px;top:18.9px;width:3.4px;height:3.4px;background:#2686e2"></div><div style="left:3.2px;top:22.7px;width:3.4px;height:3.4px;background:#e4e4e4"></div><div style="left:7px;top:22.7px;width:3.4px;height:3.4px;background:#8e060a"></div>
 <div class="t subt" style="color:#fff">orangepi@orangepi: ~/Desktop 80x24</div>
<pre><b>orangepi@orangepi</b>:<b class="p">~/Desktop</b>$ lsb_release -a
No LSB modules are available.
Distributor ID: Ubuntu
Description:    Ubuntu 22.04.2 LTS
Release:        22.04
Codename:       jammy
<b>orangepi@orangepi</b>:<b class="p">~/Desktop</b>$ </pre>
 <div class="sb" style="height:270.8px"></div>
 <div class="sh" style="top:30px;height:267px"></div>
 <div class="bb"></div>
</div>

</body></html>
